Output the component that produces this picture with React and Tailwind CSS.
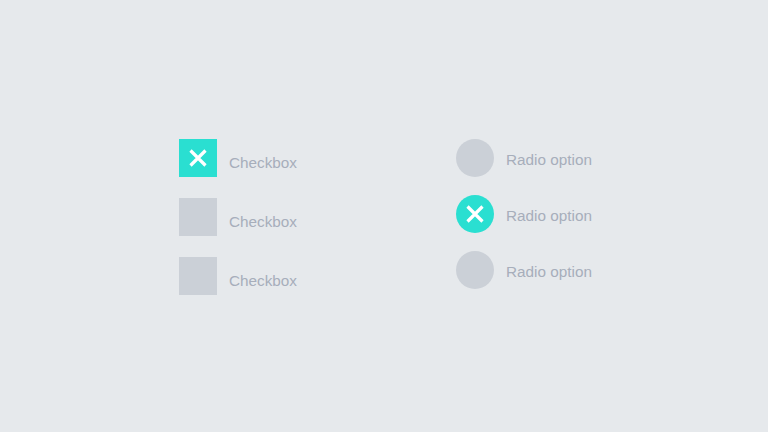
import React from 'react';

function Cross() {
  return (
    <svg width="18" height="18" viewBox="0 0 18 18" fill="none">
      <path d="M1.5 1.5L16.5 16.5M16.5 1.5L1.5 16.5" stroke="white" strokeWidth="3.2" strokeLinecap="butt" />
    </svg>
  );
}

export default function App() {
  const checks = [true, false, false];
  const radios = [false, true, false];

  return (
    <div
      className="w-[768px] h-[432px] bg-[#e6e9ec] flex pt-[139px] pl-[179px]"
      style={{ fontFamily: '"Liberation Sans", Arial, sans-serif' }}
    >
      {/* checkboxes */}
      <div className="flex flex-col gap-[21px] w-[277px]">
        {checks.map((on, i) => (
          <label key={i} className="flex items-center gap-3">
            <span
              className={`w-[38px] h-[38px] flex items-center justify-center ${
                on ? 'bg-[#2adfd1]' : 'bg-[#cbd0d7]'
              }`}
            >
              {on && <Cross />}
            </span>
            <span className="text-[15.3px] text-[#a7aebb] pt-[10px]">Checkbox</span>
          </label>
        ))}
      </div>

      {/* radios */}
      <div className="flex flex-col gap-[18px]">
        {radios.map((on, i) => (
          <label key={i} className="flex items-center gap-3">
            <span
              className={`w-[38px] h-[38px] rounded-full flex items-center justify-center ${
                on ? 'bg-[#2adfd1]' : 'bg-[#cbd0d7]'
              }`}
            >
              {on && <Cross />}
            </span>
            <span className="text-[15.3px] text-[#a7aebb] pt-[5px]">Radio option</span>
          </label>
        ))}
      </div>
    </div>
  );
}
